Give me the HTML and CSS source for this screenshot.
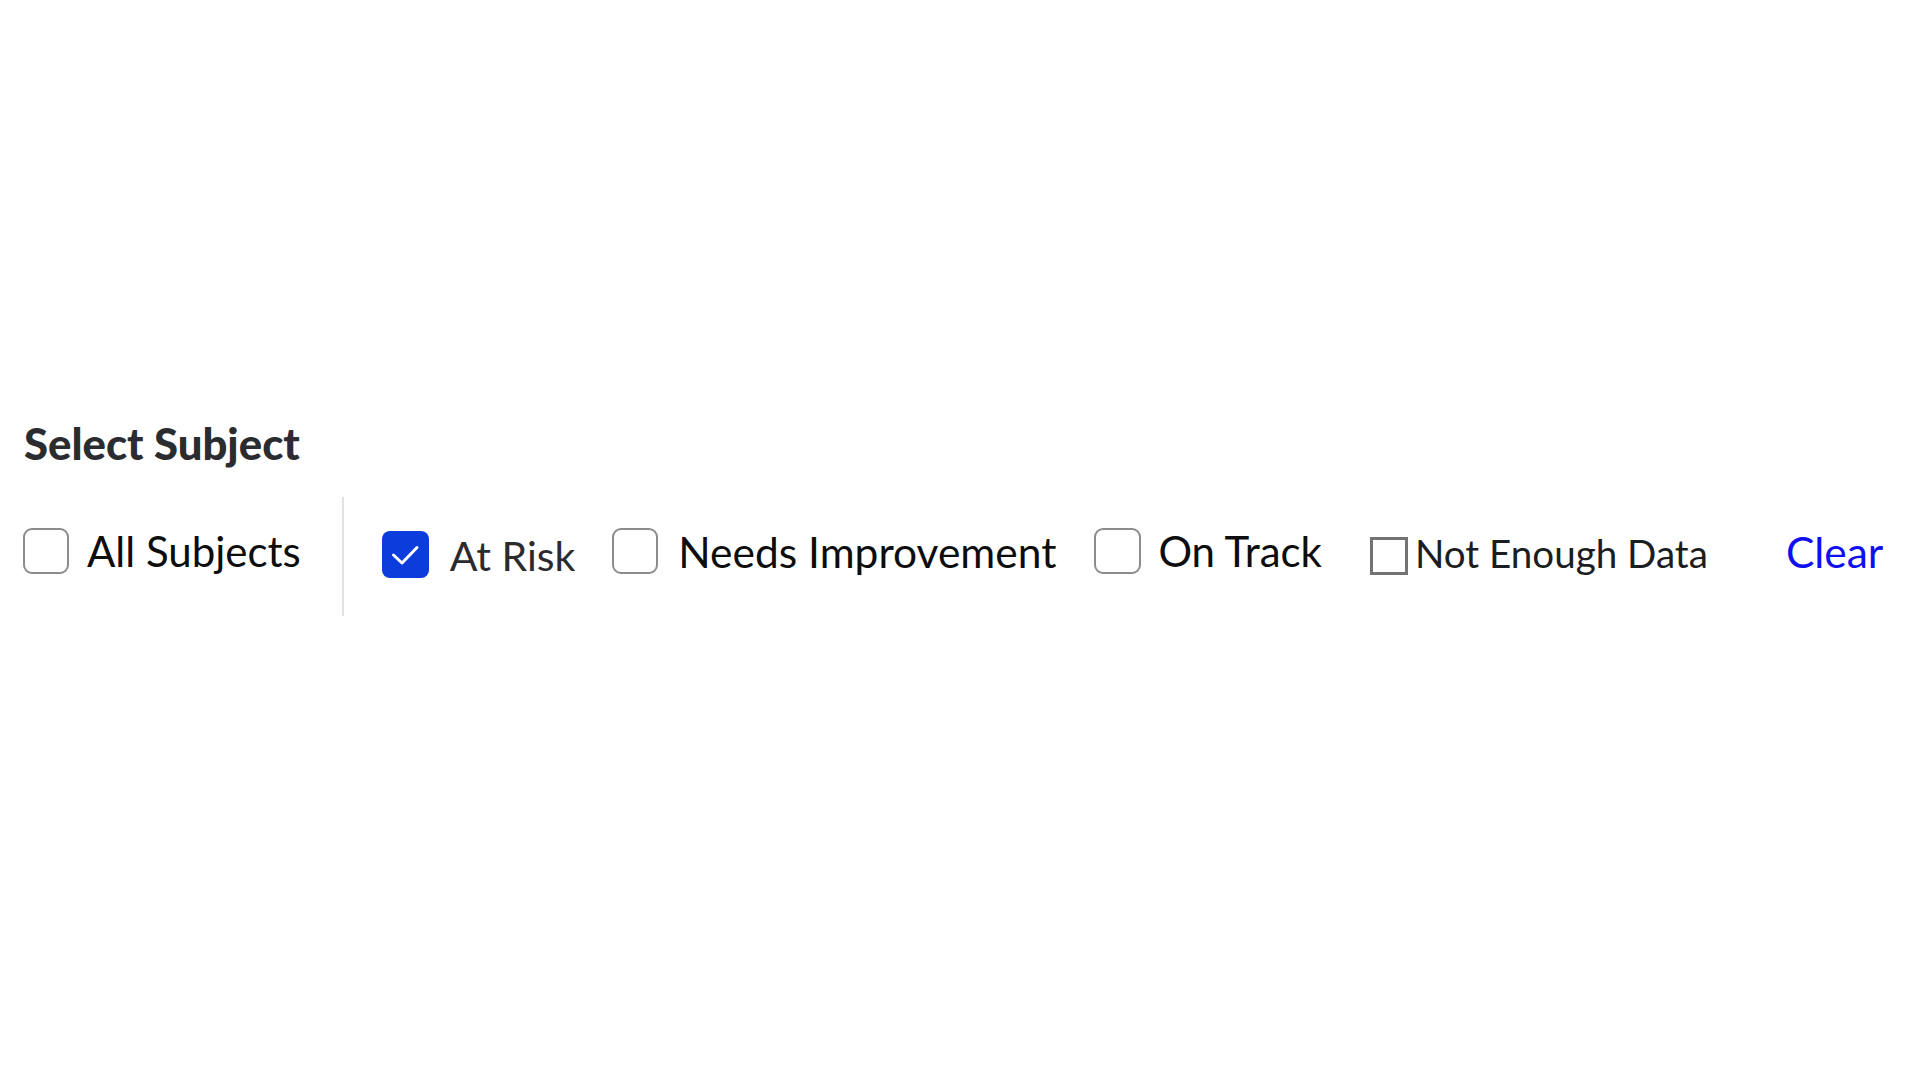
FILE: index.html
```html
<!DOCTYPE html>
<html lang="en">
<head>
<meta charset="utf-8">
<title>Select Subject</title>
<link rel="stylesheet" href="styles.css">
</head>
<body>
<main class="page">
  <h2 class="title">Select Subject</h2>
  <div class="filters">
    <label class="option option--all">
      <span class="box"></span>
      <span class="text text--all">All Subjects</span>
    </label>
    <span class="divider"></span>
    <label class="option option--risk">
      <span class="box box--checked">
        <svg class="check" viewBox="0 0 47 47" width="47" height="47"><path d="M11.5 24l8.5 8L35 16.5" fill="none" stroke="#fff" stroke-width="3" stroke-linecap="round" stroke-linejoin="round"/></svg>
      </span>
      <span class="text text--risk">At Risk</span>
    </label>
    <label class="option option--needs">
      <span class="box"></span>
      <span class="text text--needs">Needs Improvement</span>
    </label>
    <label class="option option--track">
      <span class="box box--wide"></span>
      <span class="text text--track">On Track</span>
    </label>
    <label class="option option--nodata">
      <span class="box box--square"></span>
      <span class="text text--nodata">Not Enough Data</span>
    </label>
    <a class="clear" href="#">Clear</a>
  </div>
</main>
</body>
</html>
```
FILE: styles.css
```css
* { box-sizing: border-box; }
html, body { margin: 0; padding: 0; background: #fff; }
body { font-family: "Lato", "Liberation Sans", sans-serif; color: #111; }

.page { padding: 417px 0 0 22px; }

.title {
  margin: 0 0 0 2px;
  font-size: 43.7px;
  line-height: 52px;
  font-weight: 900;
  color: #2a2c30;
}

.filters {
  display: flex;
  align-items: flex-start;
  margin-top: 28px;
  padding-left: 1px;
}

.option {
  display: flex;
  align-items: center;
  height: 46px;
  margin-top: 31px;
  cursor: pointer;
}

.box {
  display: flex;
  align-items: center;
  justify-content: center;
  width: 46px;
  height: 46px;
  border: 2px solid #8c8c8c;
  border-radius: 9px;
  background: #fff;
  flex: none;
}
.box--wide { width: 47px; }
.box--checked {
  width: 47px;
  height: 47px;
  border: none;
  border-radius: 8px;
  background: #0a3ddc;
}
.check { display: block; }
.box--square {
  width: 38px;
  height: 38px;
  border: 3px solid #737373;
  border-radius: 0;
}

.text { line-height: 1.2; white-space: nowrap; color: #0d0d0d; }
.text--all { font-size: 42px; margin-left: 18px; }
.text--risk { font-size: 41px; margin-left: 21px; margin-top: 3px; color: #2b2b2e; }
.text--needs { font-size: 42.5px; margin-left: 20px; }
.text--track { font-size: 42px; margin-left: 17px; }
.text--nodata { font-size: 38.6px; margin-left: 7px; margin-bottom: 5px; color: #1c1d21; }

.divider {
  width: 2px;
  height: 119px;
  background: #dfe3e8;
  margin-left: 41px;
  flex: none;
}

.option--risk { margin-left: 38px; margin-top: 34px; height: 47px; }
.option--needs { margin-left: 37px; }
.option--track { margin-left: 38px; }
.option--nodata { margin-left: 48px; margin-top: 40px; height: 38px; }

.clear {
  margin-left: 78px;
  margin-top: 29px;
  font-size: 42.5px;
  line-height: 1.2;
  color: #0f0ff0;
  text-decoration: none;
}
```
